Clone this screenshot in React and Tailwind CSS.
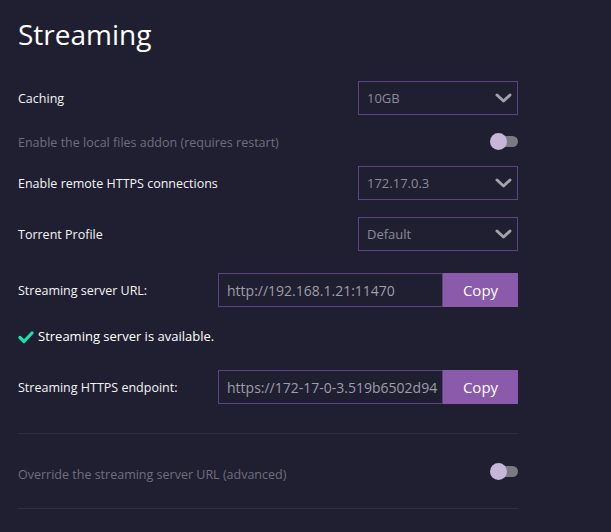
import React from 'react';

const Chevron = () => (
  <svg width="17" height="10" viewBox="0 0 17 10" className="shrink-0">
    <polyline points="2,2 8.5,8 15,2" fill="none" stroke="#a3a2ab" strokeWidth="3" strokeLinecap="round" strokeLinejoin="round" />
  </svg>
);

const Select = ({ value }) => (
  <div className="w-[160px] h-[34px] border border-[#5e4383] flex items-center justify-between pl-[8px] pr-[5px]">
    <span className="text-[13px] text-[#8b8a96] pt-[1px]">{value}</span>
    <Chevron />
  </div>
);

const Toggle = () => (
  <div className="relative w-[28px] h-[17px]">
    <div className="absolute right-0 top-[3px] w-[20px] h-[11px] rounded-full bg-[#7b7a84]" />
    <div className="absolute left-0 top-0 w-[17px] h-[17px] rounded-full bg-[#c6b6d7]" />
  </div>
);

const UrlField = ({ value }) => (
  <div className="flex h-[34px]">
    <div className="w-[225px] border border-[#5e4383] flex items-center pl-[8px] overflow-hidden">
      <span className="text-[14px] text-[#9e9da8] whitespace-nowrap">{value}</span>
    </div>
    <button className="w-[75px] bg-[#8a5aab] text-white text-[15px] flex items-center justify-center">Copy</button>
  </div>
);

const Label = ({ children, muted }) => (
  <span className={muted ? 'text-[12.5px] text-[#6f6e7d] pt-[3px]' : 'text-[12.5px] text-[#f4f4f6] pt-[3px]'}>{children}</span>
);

export default function App() {
  return (
    <div className="w-[611px] h-[532px] bg-[#201f31] overflow-hidden" style={{ fontFamily: '"Open Sans", "Noto Sans", sans-serif' }}>
      <div className="w-[500px] ml-[18px] pt-[14px]">
        <h1 className="text-[28px] leading-[40px] text-white">Streaming</h1>

        <div className="mt-[27px] flex items-center justify-between">
          <Label>Caching</Label>
          <Select value="10GB" />
        </div>

        <div className="mt-[18px] h-[17px] flex items-center justify-between">
          <Label muted>Enable the local files addon (requires restart)</Label>
          <Toggle />
        </div>

        <div className="mt-[16px] flex items-center justify-between">
          <Label>Enable remote HTTPS connections</Label>
          <Select value="172.17.0.3" />
        </div>

        <div className="mt-[17px] flex items-center justify-between">
          <Label>Torrent Profile</Label>
          <Select value="Default" />
        </div>

        <div className="mt-[22px] flex items-center justify-between">
          <Label>Streaming server URL:</Label>
          <UrlField value="http://192.168.1.21:11470" />
        </div>

        <div className="mt-[21px] h-[18px] flex items-center gap-[4px]">
          <svg width="16" height="13" viewBox="0 0 16 13">
            <polyline points="2,6.5 6,10.5 14,2" fill="none" stroke="#1ae3a9" strokeWidth="3.2" strokeLinecap="round" strokeLinejoin="round" />
          </svg>
          <span className="text-[13px] text-white">Streaming server is available.</span>
        </div>

        <div className="mt-[24px] flex items-center justify-between">
          <Label>Streaming HTTPS endpoint:</Label>
          <UrlField value="https://172-17-0-3.519b6502d94" />
        </div>

        <div className="mt-[29px] border-t border-[#2d2c40]" />

        <div className="h-[74px] flex items-center justify-between">
          <span className="text-[12.5px] text-[#6f6e7d] mt-[9px]">Override the streaming server URL (advanced)</span>
          <Toggle />
        </div>

        <div className="border-t border-[#2d2c40]" />
      </div>
    </div>
  );
}
